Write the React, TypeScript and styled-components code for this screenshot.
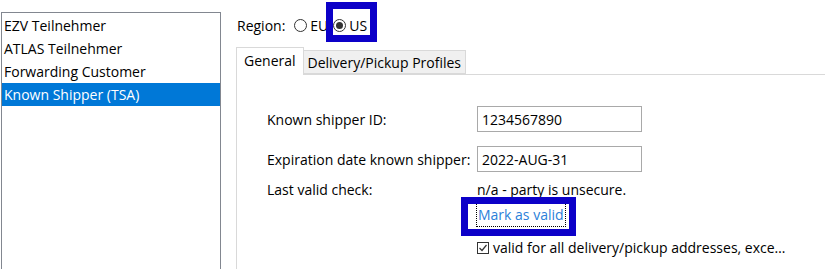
import React from "react";
import styled, { createGlobalStyle } from "styled-components";

const Global = createGlobalStyle`
  html, body { margin: 0; padding: 0; background: #fff; overflow: hidden; }
  body { font-family: "Open Sans", "Noto Sans", sans-serif; font-size: 14px; color: #000; }
`;

const Page = styled.div`
  display: flex;
  width: 825px;
  height: 269px;
  overflow: hidden;
  position: relative;
`;

const List = styled.ul`
  list-style: none;
  margin: 12px 0 0 1px;
  padding: 1px 0 0 0;
  width: 218px;
  height: 280px;
  border: 1px solid #828790;
  flex: none;
`;

const ListItem = styled.li<{ $selected?: boolean }>`
  height: 23px;
  line-height: 23px;
  padding-left: 2px;
  white-space: nowrap;
  background: ${(p) => (p.$selected ? "#0078d7" : "transparent")};
  color: ${(p) => (p.$selected ? "#fff" : "#000")};
`;

const Right = styled.div`
  margin-left: 15px;
  flex: 1;
  display: flex;
  flex-direction: column;
`;

const RegionRow = styled.div`
  margin-top: 14px;
  height: 22px;
  display: flex;
  align-items: center;
  padding-left: 1px;
  margin-bottom: 11px;
`;

const RegionLabel = styled.span`
  margin-right: 9px;
`;

const RadioItem = styled.label`
  position: relative;
  display: inline-flex;
  align-items: center;
  gap: 3px;
  margin-right: 5px;
`;

const RadioCircle = styled.span<{ $checked?: boolean }>`
  width: 11px;
  height: 11px;
  border: 1px solid #333;
  border-radius: 50%;
  display: inline-flex;
  align-items: center;
  justify-content: center;
  &::after {
    content: "";
    width: 7px;
    height: 7px;
    border-radius: 50%;
    background: ${(p) => (p.$checked ? "#333" : "transparent")};
  }
`;

const Highlight = styled.span<{ $l: number; $t: number; $r: number; $b: number }>`
  position: absolute;
  left: ${(p) => p.$l}px;
  top: ${(p) => p.$t}px;
  right: ${(p) => p.$r}px;
  bottom: ${(p) => p.$b}px;
  border: 7px solid #0c00c8;
  pointer-events: none;
`;

const TabStrip = styled.div`
  display: flex;
  align-items: flex-end;
  height: 27px;
`;

const Tab = styled.div<{ $active?: boolean }>`
  box-sizing: border-box;
  height: ${(p) => (p.$active ? "28px" : "24px")};
  margin-bottom: ${(p) => (p.$active ? "-1px" : "0")};
  padding: ${(p) => (p.$active ? "0 7px 2px 7px" : "0 4px")};
  border: 1px solid #d9d9d9;
  border-bottom: ${(p) => (p.$active ? "none" : "1px solid #d9d9d9")};
  border-left: ${(p) => (p.$active ? "1px solid #d9d9d9" : "none")};
  background: ${(p) => (p.$active ? "#fff" : "#f0f0f0")};
  display: flex;
  align-items: center;
  position: relative;
  z-index: ${(p) => (p.$active ? 1 : 0)};
  white-space: nowrap;
`;

const Panel = styled.div`
  flex: 1;
  border-top: 1px solid #d9d9d9;
  border-left: 1px solid #d9d9d9;
  padding: 31px 0 0 30px;
`;

const Form = styled.div`
  display: grid;
  grid-template-columns: 210px 165px;
  align-items: center;
`;

const Label = styled.div<{ $gap?: number }>`
  margin-top: ${(p) => p.$gap ?? 0}px;
  white-space: nowrap;
`;

const Value = styled.div<{ $gap?: number }>`
  margin-top: ${(p) => p.$gap ?? 0}px;
  white-space: nowrap;
`;

const Input = styled.div<{ $gap?: number }>`
  box-sizing: border-box;
  margin-top: ${(p) => p.$gap ?? 0}px;
  height: 26px;
  border: 1px solid #a9a9a9;
  padding: 0 4px;
  display: flex;
  align-items: center;
`;

const Empty = styled.div``;

const LinkWrap = styled.div`
  grid-column: 2;
  margin-top: 5px;
  display: flex;
`;

const Link = styled.span`
  position: relative;
  display: inline-block;
  color: #2b7fd9;
  outline: 1px dotted #000;
  outline-offset: 0;
  padding: 0 1px;
  line-height: 22px;
  white-space: nowrap;
`;

const CheckRow = styled.div`
  grid-column: 2;
  margin-top: 12px;
  display: flex;
  align-items: center;
  gap: 4px;
  white-space: nowrap;
`;

const CheckBox = styled.span`
  box-sizing: border-box;
  width: 12px;
  height: 12px;
  border: 1px solid #333;
  display: inline-flex;
  align-items: center;
  justify-content: center;
  flex: none;
`;

export default function App() {
  return (
    <>
      <Global />
      <Page>
        <List>
          <ListItem>EZV Teilnehmer</ListItem>
          <ListItem>ATLAS Teilnehmer</ListItem>
          <ListItem>Forwarding Customer</ListItem>
          <ListItem $selected>Known Shipper (TSA)</ListItem>
        </List>
        <Right>
          <RegionRow>
            <RegionLabel>Region:</RegionLabel>
            <RadioItem>
              <RadioCircle />
              EU
            </RadioItem>
            <RadioItem>
              <RadioCircle $checked />
              US
              <Highlight $l={-7} $t={-14} $r={-10} $b={-7} />
            </RadioItem>
          </RegionRow>
          <TabStrip>
            <Tab $active>General</Tab>
            <Tab>Delivery/Pickup Profiles</Tab>
          </TabStrip>
          <Panel>
            <Form>
              <Label>Known shipper ID:</Label>
              <Input>1234567890</Input>
              <Label $gap={14}>Expiration date known shipper:</Label>
              <Input $gap={14}>2022-AUG-31</Input>
              <Label $gap={8}>Last valid check:</Label>
              <Value $gap={8}>n/a - party is unsecure.</Value>
              <Empty />
              <LinkWrap>
                <Link>
                  Mark as valid
                  <Highlight $l={-16} $t={-7} $r={-11} $b={-10} />
                </Link>
              </LinkWrap>
              <Empty />
              <CheckRow>
                <CheckBox>
                  <svg width="10" height="10" viewBox="0 0 10 10">
                    <path d="M1.5 5 L4 7.5 L8.5 2" fill="none" stroke="#333" strokeWidth="1.2" />
                  </svg>
                </CheckBox>
                valid for all delivery/pickup addresses, exce…
              </CheckRow>
            </Form>
          </Panel>
        </Right>
      </Page>
    </>
  );
}
